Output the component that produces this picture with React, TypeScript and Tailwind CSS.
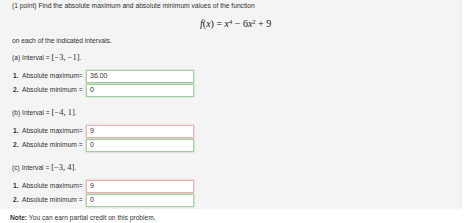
import React from "react";

type Answer = { max: string; min: string; maxOk: boolean; minOk: boolean };

const parts: { tag: string; interval: string; ans: Answer }[] = [
  { tag: "(a)", interval: "[−3, −1]", ans: { max: "36.00", min: "0", maxOk: true, minOk: true } },
  { tag: "(b)", interval: "[−4, 1]", ans: { max: "9", min: "0", maxOk: false, minOk: true } },
  { tag: "(c)", interval: "[−3, 4]", ans: { max: "9", min: "0", maxOk: false, minOk: true } },
];

const math = "font-['Liberation_Serif',serif]";

const AnswerBox = ({ value, ok }: { value: string; ok: boolean }) => (
  <div
    className={`h-[13px] w-[108px] bg-white flex items-center pl-[3px] text-[7px] text-[#333] border ${
      ok
        ? "border-[#a8cca8] shadow-[0_0_2px_rgba(80,150,80,0.45)]"
        : "border-[#e3b4b4] shadow-[0_0_2px_rgba(190,90,90,0.4)]"
    }`}
  >
    {value}
  </div>
);

const Part = ({ tag, interval, ans }: { tag: string; interval: string; ans: Answer }) => (
  <div className="mt-[11px]">
    <p className="leading-[8px]">
      {tag} Interval = <span className={`${math} text-[8.5px]`}>{interval}</span>.
    </p>
    <div className="mt-[8px] flex flex-col gap-[1px] pl-[1px]">
      <div className="flex items-center">
        <span className="w-[73px]">
          <b>1.</b>&nbsp; Absolute maximum=
        </span>
        <AnswerBox value={ans.max} ok={ans.maxOk} />
      </div>
      <div className="flex items-center">
        <span className="w-[73px]">
          <b>2.</b>&nbsp; Absolute minimum =
        </span>
        <AnswerBox value={ans.min} ok={ans.minOk} />
      </div>
    </div>
  </div>
);

export default function App() {
  return (
    <div className="w-[474px] h-[223px] overflow-hidden bg-white font-['Liberation_Sans',Arial,sans-serif] text-[6.7px] text-[#333]">
      <div className="w-[460px] h-[208px] bg-[#f4f4f4] pl-[12px] pt-[2px] shadow-[1px_0_2px_rgba(0,0,0,0.12)]">
        <p className="leading-[8px]">
          (1 point) Find the absolute maximum and absolute minimum values of the function
        </p>
        <div className={`${math} mt-[9px] h-[10px] leading-[10px] text-[10px] pl-[188px] text-[#222]`}>
          <i>f</i>(<i>x</i>) = <i>x</i>
          <sup className="text-[6.5px]">4</sup> − 6<i>x</i>
          <sup className="text-[6.5px]">2</sup> + 9
        </div>
        <p className="mt-[8px] leading-[8px]">on each of the indicated intervals.</p>
        <div className="-mt-[3px]">
          {parts.map((p) => (
            <Part key={p.tag} tag={p.tag} interval={p.interval} ans={p.ans} />
          ))}
        </div>
      </div>
      <p className="mt-[6px] pl-[10px] leading-[8px]">
        <b>Note:</b> You can earn partial credit on this problem.
      </p>
    </div>
  );
}
